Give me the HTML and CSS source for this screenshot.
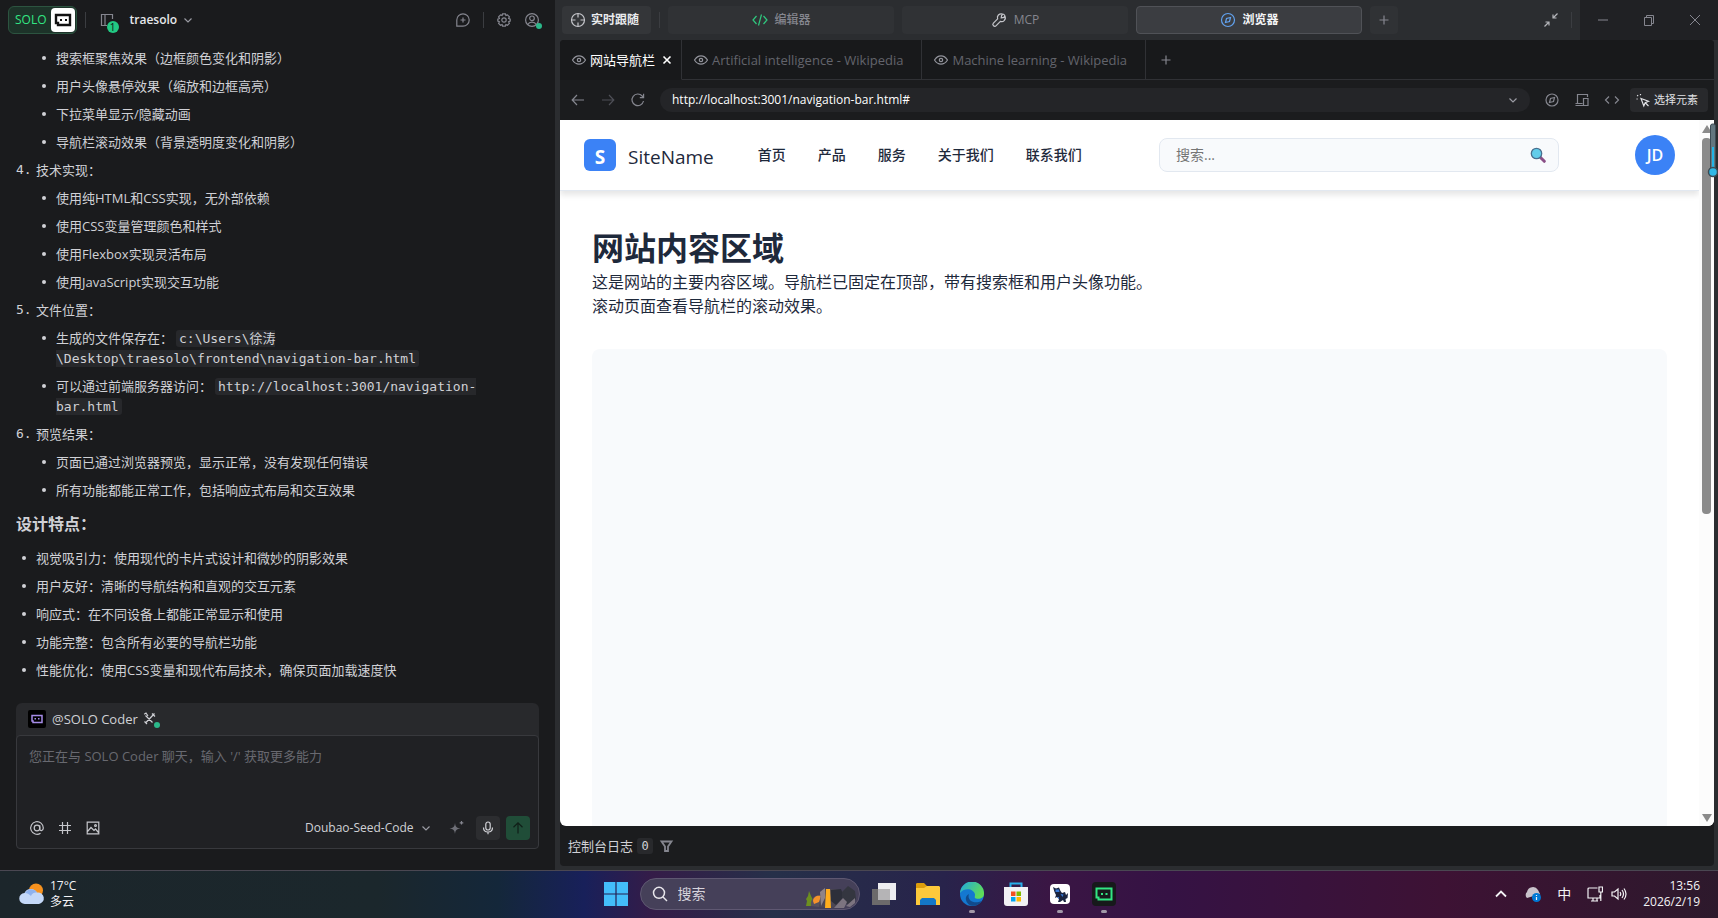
FILE: index.html
```html
<!DOCTYPE html>
<html lang="zh-CN">
<head>
    <meta charset="UTF-8">
    <meta name="viewport" content="width=device-width, initial-scale=1.0">
    <title>traesolo</title>
    <link rel="stylesheet" href="styles.css">
</head>
<body>
    <div class="app">
        <!-- Chat -->
        <aside class="chat">
            <header class="chat-header">
                <button class="solo-switch">
                    <span>SOLO</span>
                    <svg class="solo-face" viewBox="0 0 24 24"><rect width="24" height="24" rx="4" fill="#fff"/><path d="M5 7h14v10H7v-2H5z" fill="none" stroke="#111" stroke-width="2.4"/><path d="M9 11h2v2H9zM14 11h2v2h-2z" fill="#111"/></svg>
                </button>
                <span class="divider"></span>
                <button class="icon-btn tasks" aria-label="任务">
                    <svg class="icon" viewBox="0 0 16 16"><path d="M12.500 7V2.500h-11v11H7M5 2.500v11"/></svg>
                    <span class="badge">1</span>
                </button>
                <button class="project">traesolo <svg class="icon small" viewBox="0 0 12 12"><path d="M2.500 4.500L6 8l3.500-3.500"/></svg></button>
                <div class="chat-tools">
                    <button class="icon-btn" aria-label="新建对话"><svg class="icon" viewBox="0 0 16 16"><path d="M8 1.800a6.200 6.200 0 1 1 0 12.400H1.800V8A6.200 6.200 0 0 1 8 1.800zM8 5.500v5M5.500 8h5"/></svg></button>
                    <span class="divider"></span>
                    <button class="icon-btn" aria-label="设置"><svg class="icon" viewBox="0 0 16 16"><path d="M6.600 1.800h2.800l.5 1.600 1.600-.5 1.900 2-.8 1.500 1.600.8v1.800l-1.600.7.8 1.600-1.900 1.900-1.600-.6-.5 1.600H6.600l-.5-1.600-1.600.6-1.900-1.900.8-1.600-1.600-.7V7.200l1.600-.8-.8-1.500 1.900-2 1.600.5z"/><circle cx="8" cy="8" r="2.200"/></svg></button>
                    <button class="icon-btn account" aria-label="账户"><svg class="icon" viewBox="0 0 16 16"><circle cx="8" cy="8" r="6.400"/><circle cx="8" cy="6.300" r="2.300"/><path d="M3.800 12.500c1-2 2.400-2.400 4.200-2.400s3.200.4 4.200 2.400"/></svg><i class="dot"></i></button>
                </div>
            </header>

            <div class="messages">
                <ul class="sub">
                    <li>搜索框聚焦效果（边框颜色变化和阴影）</li>
                    <li>用户头像悬停效果（缩放和边框高亮）</li>
                    <li>下拉菜单显示/隐藏动画</li>
                    <li>导航栏滚动效果（背景透明度变化和阴影）</li>
                </ul>
                <ol>
                    <li>技术实现：
                        <ul>
                            <li>使用纯HTML和CSS实现，无外部依赖</li>
                            <li>使用CSS变量管理颜色和样式</li>
                            <li>使用Flexbox实现灵活布局</li>
                            <li>使用JavaScript实现交互功能</li>
                        </ul>
                    </li>
                    <li>文件位置：
                        <ul>
                            <li>生成的文件保存在：<code>c:\Users\徐涛<br>\Desktop\traesolo\frontend\navigation-bar.html</code></li>
                            <li>可以通过前端服务器访问：<code>http://localhost:3001/navigation-<br>bar.html</code></li>
                        </ul>
                    </li>
                    <li>预览结果：
                        <ul>
                            <li>页面已通过浏览器预览，显示正常，没有发现任何错误</li>
                            <li>所有功能都能正常工作，包括响应式布局和交互效果</li>
                        </ul>
                    </li>
                </ol>
                <h3>设计特点：</h3>
                <ul>
                    <li>视觉吸引力：使用现代的卡片式设计和微妙的阴影效果</li>
                    <li>用户友好：清晰的导航结构和直观的交互元素</li>
                    <li>响应式：在不同设备上都能正常显示和使用</li>
                    <li>功能完整：包含所有必要的导航栏功能</li>
                    <li>性能优化：使用CSS变量和现代布局技术，确保页面加载速度快</li>
                </ul>
            </div>

            <div class="composer">
                <div class="composer-agent">
                    <svg class="agent-avatar" viewBox="0 0 18 18"><rect width="18" height="18" rx="2" fill="#000"/><path d="M4 5.500h10v7H5v-1.500H4z" fill="none" stroke="#a58be6" stroke-width="1.500"/><path d="M6.500 8h1.500v1.500H6.500zM10 8h1.500v1.500H10z" fill="#a58be6"/></svg>
                    <span>@SOLO Coder</span>
                    <span class="agent-tool"><svg class="icon" viewBox="0 0 16 16"><path d="M3.500 4.500l7 7M2.200 3.200L4 2l2 3M12.500 2.500l-9 9.500M10 2.500l3 3M2.500 10.500l2.500 2.500" /></svg><i class="dot"></i></span>
                </div>
                <div class="composer-box">
                    <textarea aria-label="消息" placeholder="您正在与 SOLO Coder 聊天，输入 '/' 获取更多能力"></textarea>
                    <div class="composer-bar">
                        <button class="icon-btn bright" aria-label="提及"><svg class="icon" viewBox="0 0 16 16"><circle cx="8" cy="8" r="2.800"/><path d="M10.800 5.200v4c0 2 3.500 2 3.500-1.200A6.300 6.300 0 1 0 11.500 13.200"/></svg></button>
                        <button class="icon-btn bright" aria-label="上下文"><svg class="icon" viewBox="0 0 16 16"><path d="M2 5.500h12M2 10.500h12M5.500 2v12M10.500 2v12"/></svg></button>
                        <button class="icon-btn bright" aria-label="图片"><svg class="icon" viewBox="0 0 16 16"><path d="M2.200 2.200h11.600v11.600H2.200zM2.500 11.500l3.500-4 3 3 1.500-1.500 3 3.500"/><circle cx="10.500" cy="5.500" r=".9"/></svg></button>
                        <span class="model">
                            <select aria-label="模型"><option>Doubao-Seed-Code</option></select>
                            <svg class="icon small" viewBox="0 0 12 12"><path d="M2.500 4.500L6 8l3.500-3.500"/></svg>
                        </span>
                        <button class="icon-btn" aria-label="优化"><svg class="icon" viewBox="0 0 16 16"><path d="M7 3c.5 4 1.500 5 5.500 5.500C8.500 9 7.500 10 7 14 6.500 10 5.500 9 1.500 8.500 5.500 8 6.500 7 7 3z" fill="#6f7078" stroke="none"/><path d="M13.500 1v3.600M11.700 2.800h3.600"/></svg></button>
                        <button class="square-btn" aria-label="语音"><svg class="icon" viewBox="0 0 16 16"><rect x="5.800" y="2" width="4.400" height="8" rx="2.200"/><path d="M3.500 7.500c0 6 9 6 9 0M8 12v2.200"/></svg></button>
                        <button class="square-btn send" aria-label="发送"><svg class="icon" viewBox="0 0 16 16"><path d="M8 13.500V3M3.500 7.200L8 2.800l4.500 4.400"/></svg></button>
                    </div>
                </div>
            </div>
        </aside>

        <!-- Workspace -->
        <main class="workspace">
            <div class="topbar">
                <button class="tool-tab follow"><svg class="icon" viewBox="0 0 16 16"><circle cx="8" cy="8" r="6.500"/><path d="M8 1.500v4M8 10.500v4M1.500 8h4M10.500 8h4"/></svg>实时跟随</button>
                <span class="divider"></span>
                <button class="tool-tab"><svg class="icon green" viewBox="0 0 16 16"><path d="M4.500 4L1 8l3.500 4M11.500 4L15 8l-3.500 4M9.500 2.500l-3 11"/></svg>编辑器</button>
                <button class="tool-tab"><svg class="icon" viewBox="0 0 16 16"><path d="M10.200 5.800l2.800-.4.700-1.800c1 2 .8 3.800-.5 5-1 1-2.500 1.200-3.800.8l-4.200 4.300a1.700 1.700 0 0 1-2.800-2.600l4.200-4.300C6.200 5.500 6.400 4 7.400 3c1.200-1.200 3-1.500 5-.7l-1.800 1z"/></svg>MCP</button>
                <button class="tool-tab active"><svg class="icon blue" viewBox="0 0 16 16"><circle cx="8" cy="8" r="6.500"/><path d="M10.500 5.500L9.500 9.500l-4 1 1-4z"/></svg>浏览器</button>
                <button class="tool-add" aria-label="添加"><svg class="icon" viewBox="0 0 16 16"><path d="M8 3.500v9M3.500 8h9"/></svg></button>
                <button class="icon-btn collapse" aria-label="收起"><svg class="icon" viewBox="0 0 16 16"><path d="M14.500 1.500L10 6M10 2.500V6h3.500M1.500 14.500L6 10M2.500 10H6v3.500"/></svg></button>
                <span class="divider"></span>
                <div class="window-controls">
                    <button aria-label="最小化"><svg viewBox="0 0 12 12"><path d="M1 6h10"/></svg></button>
                    <button aria-label="还原"><svg viewBox="0 0 12 12"><path d="M1.500 3.500h7v8h-7zM3.500 3.500v-2h7v8h-2"/></svg></button>
                    <button aria-label="关闭"><svg viewBox="0 0 12 12"><path d="M1 1l10 10M11 1L1 11"/></svg></button>
                </div>
            </div>

            <section class="browser">
                <div class="page-tabs">
                    <button class="page-tab current"><svg class="icon" viewBox="0 0 16 16"><path d="M1.500 8c3.500-5.500 9.500-5.500 13 0-3.500 5.500-9.500 5.500-13 0z"/><circle cx="8" cy="8" r="1.700"/></svg>网站导航栏<svg class="icon close" viewBox="0 0 10 10"><path d="M1.500 1.500l7 7M8.500 1.500l-7 7"/></svg></button>
                    <button class="page-tab"><svg class="icon" viewBox="0 0 16 16"><path d="M1.500 8c3.500-5.500 9.500-5.500 13 0-3.500 5.500-9.500 5.500-13 0z"/><circle cx="8" cy="8" r="1.700"/></svg>Artificial intelligence - Wikipedia</button>
                    <button class="page-tab"><svg class="icon" viewBox="0 0 16 16"><path d="M1.500 8c3.500-5.500 9.500-5.500 13 0-3.500 5.500-9.500 5.500-13 0z"/><circle cx="8" cy="8" r="1.700"/></svg>Machine learning - Wikipedia</button>
                    <div class="page-tabs-rest"><button class="icon-btn" aria-label="新标签页"><svg class="icon" viewBox="0 0 16 16"><path d="M8 3.500v9M3.500 8h9"/></svg></button></div>
                </div>
                <div class="url-bar">
                    <button class="icon-btn" aria-label="后退"><svg class="icon" viewBox="0 0 16 16"><path d="M14 8H2.500M7 3L2.200 8 7 13"/></svg></button>
                    <button class="icon-btn faint" aria-label="前进"><svg class="icon" viewBox="0 0 16 16"><path d="M2 8h11.500M9 3l4.800 5L9 13"/></svg></button>
                    <button class="icon-btn" aria-label="刷新"><svg class="icon" viewBox="0 0 16 16"><path d="M13.500 9A5.800 5.800 0 1 1 12.200 4L13.500 5.500M13.600 1.800v3.900H9.800"/></svg></button>
                    <div class="url-field">
                        <input type="text" aria-label="地址" value="http://localhost:3001/navigation-bar.html#">
                        <svg class="icon small" viewBox="0 0 12 12"><path d="M2.500 4.500L6 8l3.500-3.500"/></svg>
                    </div>
                    <button class="icon-btn" aria-label="外部浏览器"><svg class="icon" viewBox="0 0 16 16"><circle cx="8" cy="8" r="6"/><path d="M10.500 5.500L9.500 9.500l-4 1 1-4z"/></svg></button>
                    <button class="icon-btn" aria-label="设备"><svg class="icon" viewBox="0 0 16 16"><path d="M13.500 5V2.500h-10v9M1.500 13.500H9M1.500 11.500h7M9.500 6.500h4.500v7H9.500z"/></svg></button>
                    <button class="icon-btn" aria-label="开发者工具"><svg class="icon" viewBox="0 0 16 16"><path d="M5 4.500L1.500 8 5 11.500M11 4.500L14.500 8 11 11.500"/></svg></button>
                    <button class="pick-btn"><svg class="icon" viewBox="0 0 16 16"><path d="M6 6.500l7.500 2.800-3.300 1.400L8.800 14zM10.500 11l3 3M5.500 2v1.200M2.200 3.200l.9.900M1.500 7h1.200"/></svg>选择元素</button>
                </div>

                <div class="viewport">
                    <div class="site">
                        <nav class="navbar">
                            <div class="brand"><span class="brand-mark">S</span><span class="brand-name">SiteName</span></div>
                            <div class="nav-links">
                                <a href="#">首页</a>
                                <a href="#">产品</a>
                                <a href="#">服务</a>
                                <a href="#">关于我们</a>
                                <a href="#">联系我们</a>
                            </div>
                            <div class="search-box">
                                <input type="text" aria-label="搜索" placeholder="搜索...">
                                <svg viewBox="0 0 16 16"><path d="M10 10l4.300 4.300" stroke="#8a4f86" stroke-width="3" stroke-linecap="round"/><circle cx="6.500" cy="6.500" r="5.200" fill="#62cdea" stroke="#49708f" stroke-width="1.300"/></svg>
                            </div>
                            <button class="avatar">JD</button>
                        </nav>
                        <div class="site-main">
                            <h1>网站内容区域</h1>
                            <p>这是网站的主要内容区域。导航栏已固定在顶部，带有搜索框和用户头像功能。</p>
                            <p>滚动页面查看导航栏的滚动效果。</p>
                            <div class="placeholder"></div>
                        </div>
                    </div>
                    <div class="scrollbar">
                        <svg viewBox="0 0 10 8"><path d="M5 0l5 8H0z"/></svg>
                        <div class="scroll-track"><div class="scroll-thumb"></div></div>
                        <svg viewBox="0 0 10 8"><path d="M0 0h10L5 8z"/></svg>
                    </div>
                </div>

                <div class="console">
                    <span>控制台日志</span>
                    <span class="count">0</span>
                    <button class="icon-btn" aria-label="筛选"><svg class="icon" viewBox="0 0 16 16"><path d="M2.500 3.500h10L9 8.500V13H6v-4.500z" stroke-width="1.800"/></svg></button>
                </div>
            </section>

            <svg class="gauge" viewBox="0 0 12 56"><rect x="3.500" y="1" width="5" height="48" rx="2" fill="#63767f" stroke="#3c4b54"/><path d="M6 24v24" stroke="#22b4e6" stroke-width="2"/><circle cx="6" cy="49" r="4.500" fill="#2fb8e6" stroke="#3c4b54" stroke-width="1.500"/></svg>
        </main>
    </div>

    <!-- Taskbar -->
    <footer class="taskbar">
        <div class="weather">
            <svg viewBox="0 0 26 24"><circle cx="17" cy="8.500" r="7" fill="#f7921e"/><path d="M12 5a7 7 0 0 1 7-3.200A7 7 0 0 0 12 5z" fill="#fbc02d"/><path d="M6 22a5.500 5.500 0 0 1-.5-11A7 7 0 0 1 18 10.500 5.800 5.800 0 0 1 20 22z" fill="#c4d8f8"/><path d="M6 11a7 7 0 0 1 12-.5c-4 0-5 1.500-6 3.500-2-2-4-3-6-3z" fill="#8fb2ee"/></svg>
            <div>17°C<br>多云</div>
        </div>
        <div class="dock">
            <button aria-label="开始"><svg viewBox="0 0 24 24"><path d="M0 0h11.400v11.400H0zM12.600 0H24v11.400H12.600zM0 12.600h11.400V24H0zM12.600 12.600H24V24H12.600z" fill="#43bdfa"/></svg></button>
            <label class="task-search">
                <svg viewBox="0 0 16 16"><circle cx="7" cy="6.800" r="5.500"/><path d="M11 11l4 4"/></svg>
                <input type="text" aria-label="搜索" placeholder="搜索">
                <svg class="scene" viewBox="0 0 50 22"><path d="M0 20l1-5-1-2 2-3 1-5 2 5 2 4-1 6z" fill="#6d8f1f"/><path d="M5 20c-1-5 2-11 9-11l2 4-3 8z" fill="#57515e"/><path d="M7 15c0-4 4-6 8-5l-2 6-5 2z" fill="#f5922a"/><path d="M13 21l3-18 14 0 8 3-3 16z" fill="#4c4754"/><path d="M14 6l5-4 0 10-4 8z" fill="#8e8489"/><path d="M19 22l1-19 4 0 1 19z" fill="#ffad1d"/><path d="M25 4l10-1 3 8-8 8-5-4z" fill="#2d2f3a"/><path d="M36 6l6-6 7 5 1 8-6 6-8-3z" fill="#343640"/><path d="M28 22l9-10 4 4-3 6zM40 20l9-8 0 5-5 4z" fill="#7c7480"/></svg>
            </label>
            <button aria-label="任务视图"><svg viewBox="0 0 24 24"><path d="M6 1h18v17H6z" fill="#ededf0"/><path d="M0 7h18v16H0z" fill="#6c6a6b"/><path d="M6 7h12v11H6z" fill="#b5b4b6"/></svg></button>
            <button aria-label="文件资源管理器"><svg viewBox="0 0 24 24"><path d="M0 2c0-1 1-1 2-1h6l3 3h11v4H0z" fill="#dd9d0c"/><path d="M0 6h8l3-2h12l1 1v18H0z" fill="#fdc93b"/><path d="M4 23v-5l2-2h12l2 2v5z" fill="#1478c8"/></svg></button>
            <button class="running" aria-label="Edge"><svg viewBox="0 0 24 24"><defs><linearGradient id="edge" x1="0" y1="0" x2="1" y2="0.500"><stop offset="0" stop-color="#1ea7e4"/><stop offset="1" stop-color="#5fdc58"/></linearGradient></defs><circle cx="12" cy="12" r="12" fill="#1478d0"/><path d="M0 11A12 12 0 0 1 24 12c0 4-4 5.500-8 4.500-2-.5-1-2-1-4C14 7 5 5 0 11z" fill="url(#edge)"/><path d="M9 12c-2 5 3 11 13 7-4 6-14 7-16-1-.8-3 1-5 3-6z" fill="#114a8b"/></svg></button>
            <button aria-label="应用商店"><svg viewBox="0 0 24 24"><path d="M6.500 6V1.500h11V6" fill="none" stroke="#28aee8" stroke-width="2"/><path d="M0 5h24v16a3 3 0 0 1-3 3H3a3 3 0 0 1-3-3z" fill="#f1f1f4"/><path d="M7 9.500h4.500V14H7z" fill="#f25022"/><path d="M12.500 9.500H17V14h-4.500z" fill="#7fba00"/><path d="M7 15h4.500v4.500H7z" fill="#00a4ef"/><path d="M12.500 15H17v4.500h-4.500z" fill="#ffb900"/></svg></button>
            <button class="running" aria-label="助手"><svg viewBox="0 0 24 24"><rect x="2" y="2" width="20" height="20" rx="4" fill="#fff"/><path d="M5 5l3 1.500 3-1L12.500 9l1.500 2 3-1 1 3 2-2-.5 5-2 1 .5 3h-2l-1-2-3 2h-2l1-3-2-2-2 1 1-3-1.500-3z" fill="#1b2540"/><path d="M7.500 7.500h3.500l.5 2.500h-4zM12.500 12l3 .5-1 2.500zM9 15h2v2z" fill="#3779d8"/></svg></button>
            <button class="running" aria-label="TRAE SOLO"><svg viewBox="0 0 24 24"><rect width="24" height="24" rx="4" fill="#17191b"/><path d="M4.500 6.500h15v11h-13v-2h-2z" fill="none" stroke="#32e683" stroke-width="2"/><path d="M9 11h2v2H9zM13.500 11h2v2h-2z" fill="#32e683"/></svg></button>
        </div>
        <div class="tray">
            <svg viewBox="0 0 16 16"><path d="M3 10.500L8 5.500l5 5" stroke-width="1.800"/></svg>
            <svg viewBox="0 0 16 16"><path d="M2 12a4 4 0 0 1 0-6 6 6 0 0 1 11-2l2 4z" fill="#c9c3cb" stroke="none"/><circle cx="11.500" cy="11.500" r="4.500" fill="#0078d4" stroke="none"/><path d="M11.500 11v3M11.500 9v1"/></svg>
            <span class="ime">中</span>
            <svg viewBox="0 0 16 16"><path d="M10.500 2H2a1 1 0 0 0-1 1v9h12V9M4 15h7M6 12v3M10 12v3M12 1h3.500v5H12zM13.800 6v9"/></svg>
            <svg class="volume" viewBox="0 0 16 16"><path d="M1 6h2.500L7 3v10L3.500 10H1zM9 6q1.500 2 0 4M11 4q3 4 0 8M13 2.500q4 5.500 0 11"/></svg>
            <div class="clock">13:56<br>2026/2/19</div>
        </div>
    </footer>
</body>
</html>
```

FILE: styles.css
```css
* {
    margin: 0;
    padding: 0;
    box-sizing: border-box;
}

body {
    font-family: 'Open Sans', 'Noto Sans CJK SC', sans-serif;
    font-size: 13px;
    line-height: 20px;
    color: #d0d1d6;
    background: #2b2d30;
    height: 100vh;
    display: flex;
    flex-direction: column;
    overflow: hidden;
}

button, input, select, textarea {
    font: inherit;
    color: inherit;
    background: none;
    border: none;
    outline: none;
}

button {
    display: flex;
    align-items: center;
    justify-content: center;
    cursor: pointer;
    white-space: nowrap;
}

ul, ol {
    list-style: none;
}

.icon {
    width: 16px;
    height: 16px;
    flex: none;
    fill: none;
    stroke: currentColor;
    stroke-width: 1.2;
}

.icon.small {
    width: 12px;
    height: 12px;
    color: #9a9ba3;
}

.icon-btn {
    position: relative;
    width: 16px;
    height: 16px;
    flex: none;
    color: #85868f;
}

.icon-btn.bright {
    color: #c5c6cb;
}

.icon-btn.faint {
    color: #4e4f56;
}

.divider {
    width: 1px;
    height: 16px;
    flex: none;
    background: #3b3d41;
}

.dot {
    position: absolute;
    right: -2px;
    bottom: -1px;
    width: 6px;
    height: 6px;
    border-radius: 50%;
    background: #2bb88a;
}

.app {
    flex: 1;
    min-height: 0;
    display: flex;
}

/* Chat */
.chat {
    width: 555px;
    flex: none;
    display: flex;
    flex-direction: column;
    background: #1a1b1d;
}

.chat-header {
    height: 40px;
    flex: none;
    display: flex;
    align-items: center;
    padding: 0 15px 0 8px;
    gap: 8px;
}

.solo-switch {
    height: 28px;
    padding: 0 1px 0 6px;
    gap: 4px;
    border: 1px solid #2c5440;
    border-radius: 6px;
    background: #1d3329;
    color: #32e683;
    font-size: 12px;
    font-weight: 500;
}

.solo-face {
    width: 24px;
    height: 24px;
}

.tasks {
    margin-left: 6px;
}

.badge {
    position: absolute;
    left: 7px;
    top: 9px;
    width: 12px;
    height: 12px;
    border-radius: 50%;
    background: #22c983;
    color: #111;
    font-size: 10px;
    line-height: 12px;
    text-align: center;
}

.project {
    margin-left: 6px;
    gap: 5px;
    font-size: 12px;
    font-weight: 600;
    color: #e6e7ea;
}

.chat-tools {
    display: flex;
    align-items: center;
    gap: 12px;
    margin-left: auto;
}

.messages {
    flex: 1;
    min-height: 0;
    overflow: hidden;
    padding: 8px 16px 0;
}

.messages li {
    position: relative;
    margin-bottom: 8px;
}

.messages ul > li {
    padding-left: 20px;
}

.messages ul > li::before {
    content: '';
    position: absolute;
    left: 6px;
    top: 8px;
    width: 4px;
    height: 4px;
    border-radius: 50%;
    background: #d0d1d6;
}

.messages .sub {
    padding-left: 20px;
}

.messages ol {
    counter-reset: step 3;
}

.messages ol > li {
    counter-increment: step;
    padding-left: 20px;
}

.messages ol > li::before {
    content: counter(step) '.';
    position: absolute;
    left: 0;
    font-family: 'DejaVu Sans Mono', monospace;
}

.messages ol ul {
    padding-top: 8px;
}

.messages code {
    margin-left: 3px;
    padding: 1px 3px;
    border-radius: 3px;
    background: #27282b;
    font-family: 'DejaVu Sans Mono', 'Noto Sans CJK SC', monospace;
    font-size: 13px;
    line-height: 14px;
}

.messages h3 {
    margin: 12px 0;
    font-size: 16px;
    line-height: 24px;
}

.composer {
    flex: none;
    margin: 0 16px 21px;
    border-radius: 6px;
    background: #28292c;
}

.composer-agent {
    height: 32px;
    display: flex;
    align-items: center;
    gap: 6px;
    padding: 0 12px;
}

.agent-avatar {
    width: 18px;
    height: 18px;
}

.agent-tool {
    position: relative;
    height: 16px;
    margin-left: -2px;
}

.composer-box {
    border: 1px solid #38393d;
    border-radius: 4px;
    background: #202124;
    padding: 10px 8px 8px 12px;
}

.composer-box textarea {
    display: block;
    width: 100%;
    height: 70px;
    resize: none;
}

.composer-box textarea::placeholder {
    color: #686970;
}

.composer-bar {
    display: flex;
    align-items: center;
    gap: 12px;
}

.model {
    position: relative;
    display: flex;
    align-items: center;
    margin-left: auto;
    margin-right: 4px;
}

.model select {
    appearance: none;
    font-size: 12px;
    padding-right: 18px;
}

.model .icon {
    position: absolute;
    right: 0;
    pointer-events: none;
}

.square-btn {
    width: 24px;
    height: 24px;
    border-radius: 4px;
    background: #2c2d30;
}

.square-btn.send {
    margin-left: -6px;
    background: #204d38;
    color: #101f18;
}

/* Workspace */
.workspace {
    position: relative;
    flex: 1;
    min-width: 0;
    display: flex;
    flex-direction: column;
    padding: 0 4px 4px 5px;
    background: #2b2d30;
}

.topbar {
    height: 40px;
    flex: none;
    display: flex;
    align-items: center;
    gap: 8px;
    margin-right: -4px;
    padding-left: 2px;
}

.tool-tab {
    flex: 0 1 226px;
    height: 28px;
    gap: 7px;
    border: 1px solid transparent;
    border-radius: 4px;
    background: #303235;
    color: #85868f;
    font-size: 12px;
    font-weight: 500;
}

.tool-tab.follow {
    flex: none;
    gap: 5px;
    padding: 0 11px 0 7px;
    background: #343639;
    color: #e9eaed;
    font-weight: 700;
}

.tool-tab.active {
    border-color: #505257;
    background: #3b3d41;
    color: #f4f5f7;
    font-weight: 700;
}

.tool-tab .icon {
    color: #c5c6cb;
}

.tool-tab .green {
    color: #2fc97f;
}

.tool-tab .blue {
    color: #62a3f0;
}

.tool-add {
    width: 28px;
    height: 28px;
    border-radius: 4px;
    background: #303235;
    color: #85868f;
}

.collapse {
    margin-left: auto;
    margin-right: 4px;
    color: #b4b5ba;
}

.window-controls {
    align-self: stretch;
    display: grid;
    grid-template-columns: repeat(3, 46px);
    background: #202124;
    color: #85868f;
}

.window-controls svg {
    width: 12px;
    height: 12px;
    fill: none;
    stroke: currentColor;
}

.browser {
    flex: 1;
    min-height: 0;
    display: flex;
    flex-direction: column;
    overflow: hidden;
    border-radius: 4px;
    background: #1b1c1e;
}

.page-tabs {
    height: 40px;
    flex: none;
    display: flex;
    background: #18191b;
}

.page-tab {
    gap: 3px;
    padding: 0 18px 0 11px;
    border-right: 1px solid #303135;
    border-bottom: 1px solid #303135;
    color: #63646c;
}

.page-tab .icon {
    color: #92939b;
}

.page-tab.current {
    padding: 0 9px 0 11px;
    border-bottom-color: transparent;
    color: #fff;
}

.page-tab .close {
    width: 10px;
    height: 10px;
    margin-left: 4px;
    color: #fff;
    stroke-width: 1.6;
}

.page-tabs-rest {
    flex: 1;
    display: flex;
    align-items: center;
    padding-left: 12px;
    border-bottom: 1px solid #303135;
}

.url-bar {
    height: 40px;
    flex: none;
    display: flex;
    align-items: center;
    gap: 14px;
    padding: 0 6px 0 10px;
}

.url-field {
    flex: 1;
    height: 24px;
    display: flex;
    align-items: center;
    padding: 0 11px 0 12px;
    border-radius: 12px;
    background: #242528;
}

.url-field input {
    flex: 1;
    font-size: 12px;
    color: #fff;
}

.pick-btn {
    height: 24px;
    gap: 3px;
    padding: 0 10px 0 5px;
    margin-left: -4px;
    border-radius: 4px;
    background: #28292c;
    font-size: 11px;
    color: #e0e1e5;
}

/* Previewed site */
.viewport {
    flex: 1;
    min-height: 0;
    display: flex;
    overflow: hidden;
    border-radius: 0 0 6px 6px;
    background: #fff;
    color: #1e293b;
}

.site {
    flex: 1;
    min-width: 0;
    display: flex;
    flex-direction: column;
}

.navbar {
    height: 71px;
    flex: none;
    display: flex;
    align-items: center;
    padding: 0 24px;
    border-bottom: 1px solid #e2e8f0;
    box-shadow: 0 4px 6px rgba(0, 0, 0, 0.1);
}

.brand {
    display: flex;
    align-items: center;
    gap: 12px;
    font-size: 19px;
    font-weight: 500;
}

.brand-mark {
    width: 32px;
    height: 32px;
    border-radius: 6px;
    background: #3b82f6;
    color: #fff;
    font-weight: 700;
    line-height: 36px;
    text-align: center;
}

.brand-name {
    padding-top: 3px;
}

.nav-links {
    display: flex;
    gap: 32px;
    margin-left: 44px;
    font-size: 14px;
    font-weight: 500;
}

.nav-links a {
    color: inherit;
    text-decoration: none;
}

.search-box {
    width: 400px;
    height: 34px;
    display: flex;
    align-items: center;
    margin-left: auto;
    padding: 0 12px 0 16px;
    border: 1px solid #e2e8f0;
    border-radius: 8px;
    background: #f8fafc;
}

.search-box input {
    flex: 1;
    font-size: 14px;
}

.search-box input::placeholder {
    color: #757575;
}

.search-box svg {
    width: 16px;
    height: 16px;
}

.avatar {
    width: 40px;
    height: 40px;
    margin-left: 76px;
    border-radius: 50%;
    background: #3b82f6;
    color: #fff;
    font-size: 16px;
    font-weight: 600;
}

.site-main {
    flex: 1;
    display: flex;
    flex-direction: column;
    padding: 34px 32px 0;
}

.site-main h1 {
    font-size: 32px;
    line-height: 45px;
}

.site-main p {
    font-size: 16px;
    line-height: 24px;
}

.placeholder {
    flex: 1;
    margin-top: 31px;
    border-radius: 8px 8px 0 0;
    background: #f8fafc;
}

.scrollbar {
    width: 15px;
    flex: none;
    display: flex;
    flex-direction: column;
    align-items: center;
    padding: 5px 0 4px;
    background: #fcfcfc;
}

.scrollbar svg {
    width: 10px;
    height: 8px;
    fill: #8b8b8b;
}

.scroll-track {
    flex: 1;
    width: 9px;
    padding: 5px 0;
}

.scroll-thumb {
    height: 56%;
    border-radius: 4px;
    background: #8b8b8b;
}

.gauge {
    position: absolute;
    right: -1px;
    top: 123px;
    width: 12px;
    height: 56px;
}

.console {
    height: 40px;
    flex: none;
    display: flex;
    align-items: center;
    gap: 4px;
    padding: 0 8px;
}

.count {
    width: 16px;
    height: 16px;
    border-radius: 3px;
    background: #28292c;
    font-family: 'DejaVu Sans Mono', monospace;
    font-size: 12px;
    line-height: 16px;
    text-align: center;
}

.console .icon-btn {
    margin-left: 2px;
}

/* Taskbar */
.taskbar {
    height: 48px;
    flex: none;
    display: grid;
    grid-template-columns: 1fr auto 1fr;
    align-items: center;
    padding: 0 18px 2px 19px;
    border-top: 1px solid #4a4752;
    background: linear-gradient(90deg, #1c262b 0%, #1b272c 22%, #14273a 29%, #18205a 34%, #351c48 38%, #263049 45%, #28234b 55%, #3a1644 61%, #351244 68%, #3d1234 84%, #2d192c 100%);
    color: #f3f3f5;
    font-size: 12px;
    line-height: 16px;
}

.weather {
    display: flex;
    align-items: center;
    gap: 5px;
}

.weather svg {
    width: 26px;
    height: 24px;
}

.dock {
    display: flex;
    align-items: center;
    gap: 20px;
}

.dock button {
    position: relative;
    width: 24px;
    height: 24px;
}

.dock button svg {
    width: 24px;
    height: 24px;
}

.dock .running::after {
    content: '';
    position: absolute;
    bottom: -7px;
    width: 6px;
    height: 3px;
    border-radius: 2px;
    background: #a299a8;
}

.task-search {
    width: 220px;
    height: 32px;
    display: flex;
    align-items: center;
    gap: 10px;
    margin: 0 -8px;
    padding: 0 3px 0 11px;
    border: 1px solid #5f5872;
    border-radius: 16px;
    background: #454059;
    font-size: 14px;
}

.task-search svg {
    width: 16px;
    height: 16px;
    flex: none;
    fill: none;
    stroke: #e8e6ec;
    stroke-width: 1.5;
}

.task-search .scene {
    width: 50px;
    height: 22px;
    margin-top: 6px;
    stroke: none;
}

.task-search input {
    flex: 1;
    min-width: 0;
}

.task-search input::placeholder {
    color: #d6d3dc;
}

.tray {
    display: flex;
    align-items: center;
    justify-content: flex-end;
    gap: 16px;
}

.tray svg {
    width: 16px;
    height: 16px;
    fill: none;
    stroke: #f3f3f5;
    stroke-width: 1.2;
}

.tray .volume {
    margin-left: -8px;
}

.ime {
    font-size: 14px;
}

.clock {
    text-align: right;
}
```
